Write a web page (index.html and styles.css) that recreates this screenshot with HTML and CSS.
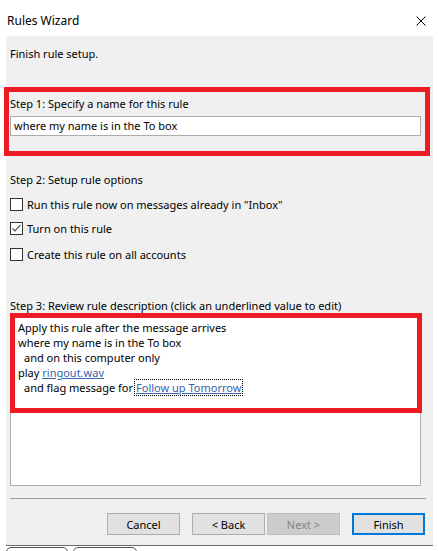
FILE: index.html
```html
<!DOCTYPE html>
<html>
<head>
<meta charset="utf-8">
<link rel="stylesheet" href="styles.css">
</head>
<body>
<div class="window">
  <div class="titlebar">
    <span class="title">Rules Wizard</span>
    <svg class="close" width="10" height="10" viewBox="0 0 10 10"><path d="M0.5 0.5 L9.5 9.5 M9.5 0.5 L0.5 9.5" stroke="#000" stroke-width="1" fill="none"/></svg>
  </div>
  <div class="panel">
    <div class="intro">Finish rule setup.</div>
    <div class="hl hl-step1">
      <div class="label">Step 1: Specify a name for this rule</div>
      <div class="input">where my name is in the To box</div>
    </div>
    <div class="label step2">Step 2: Setup rule options</div>
    <div class="check row1"><span class="box"></span><span>Run this rule now on messages already in "Inbox"</span></div>
    <div class="check row2"><span class="box"><svg width="11" height="11" viewBox="0 0 11 11"><path d="M1.5 5.5 L4 8 L9.5 2" stroke="#555" stroke-width="1.2" fill="none"/></svg></span><span>Turn on this rule</span></div>
    <div class="check row3"><span class="box"></span><span>Create this rule on all accounts</span></div>
    <div class="label step3">Step 3: Review rule description (click an underlined value to edit)</div>
    <div class="desc">
      <div class="hl hl-desc">
        <div class="line">Apply this rule after the message arrives</div>
        <div class="line">where my name is in the To box</div>
        <div class="line indent">and on this computer only</div>
        <div class="line">play <span class="link">ringout.wav</span></div>
        <div class="line indent">and flag message for<span class="link focus">Follow up Tomorrow</span></div>
      </div>
    </div>
    <div class="sep"></div>
    <div class="buttons">
      <div class="btn">Cancel</div>
      <div class="btn back">&lt; Back</div>
      <div class="btn disabled">Next &gt;</div>
      <div class="btn primary">Finish</div>
    </div>
  </div>
  <div class="taskbar">
    <div class="tab t1"></div>
    <div class="tab t2"></div>
  </div>
</div>
</body>
</html>
```
FILE: styles.css
```css
html, body {
  margin: 0;
  padding: 0;
  background: #ffffff;
}
body {
  font-family: "Noto Sans", "Open Sans", sans-serif;
  font-size: 11px;
  color: #000;
}
.window {
  width: 438px;
  height: 551px;
  overflow: hidden;
}
.titlebar {
  height: 36px;
  display: flex;
  align-items: center;
  justify-content: space-between;
  padding: 0 12px 0 7px;
  box-sizing: border-box;
}
.title {
  font-size: 12px;
  line-height: 16px;
  margin-top: 5px;
}
.close {
  display: block;
  margin-top: 5px;
}
.panel {
  margin-left: 6px;
  width: 427px;
  height: 509px;
  box-sizing: border-box;
  background: #f0f0f0;
  padding: 10px 0 0 4px;
}
.intro, .label {
  line-height: 16px;
  white-space: nowrap;
}
.hl {
  border: 5px solid #ed1c24;
  box-sizing: border-box;
}
.hl-step1 {
  margin-top: 25px;
  margin-left: -6px;
  width: 426px;
  padding: 4px 0 15px 1px;
}
.input {
  margin-top: 4px;
  width: 411px;
  height: 20px;
  box-sizing: border-box;
  border: 1px solid #adadad;
  background: #fff;
  padding-left: 3px;
  line-height: 18px;
}
.step2 { margin-top: 16px; }
.check {
  display: flex;
  align-items: center;
  height: 16px;
  white-space: nowrap;
}
.row1 { margin-top: 8px; }
.row2 { margin-top: 8px; }
.row3 { margin-top: 10px; }
.box {
  width: 13px;
  height: 13px;
  box-sizing: border-box;
  border: 1px solid #333;
  background: #fff;
  margin-right: 4px;
  display: flex;
  align-items: center;
  justify-content: center;
}
.box svg { display: block; }
.step3 { margin-top: 36px; }
.desc {
  margin-top: -1px;
  width: 411px;
  height: 173px;
  box-sizing: border-box;
  border: 1px solid #adadad;
  background: #fff;
}
.hl-desc {
  margin: -1px -2px 0 -1px;
  height: 100px;
  padding: 2px 0 0 3px;
}
.line {
  line-height: 15px;
  white-space: nowrap;
}
.indent { padding-left: 6px; }
.link {
  color: #3a62ad;
  text-decoration: underline;
}
.focus {
  border: 1px dotted #000;
  padding: 0 1px;
  margin-left: 1px;
}
.sep {
  margin-top: 12px;
  width: 416px;
  height: 1px;
  background: #a0a0a0;
}
.buttons {
  margin-top: 14px;
  padding-left: 97px;
  display: flex;
}
.btn {
  flex: 0 0 73px;
  width: 73px;
  height: 22px;
  box-sizing: border-box;
  border: 1px solid #adadad;
  background: #e1e1e1;
  display: flex;
  align-items: center;
  justify-content: center;
  margin-right: 12px;
}
.btn.back { margin-right: 2px; }
.btn.disabled {
  background: #cccccc;
  border-color: #bfbfbf;
  color: #838383;
}
.btn.primary {
  border: 2px solid #0078d7;
  margin-right: 0;
}
.taskbar {
  height: 6px;
  border-top: 1px solid #6a6a6a;
  margin-left: 6px;
  width: 427px;
  display: flex;
  background: #fff;
}
.tab {
  height: 8px;
  border: 1px solid #555;
  border-radius: 5px 5px 0 0;
  margin-top: 1px;
  box-sizing: border-box;
}
.t1 { width: 62px; }
.t2 { width: 64px; margin-left: 5px; }
```
